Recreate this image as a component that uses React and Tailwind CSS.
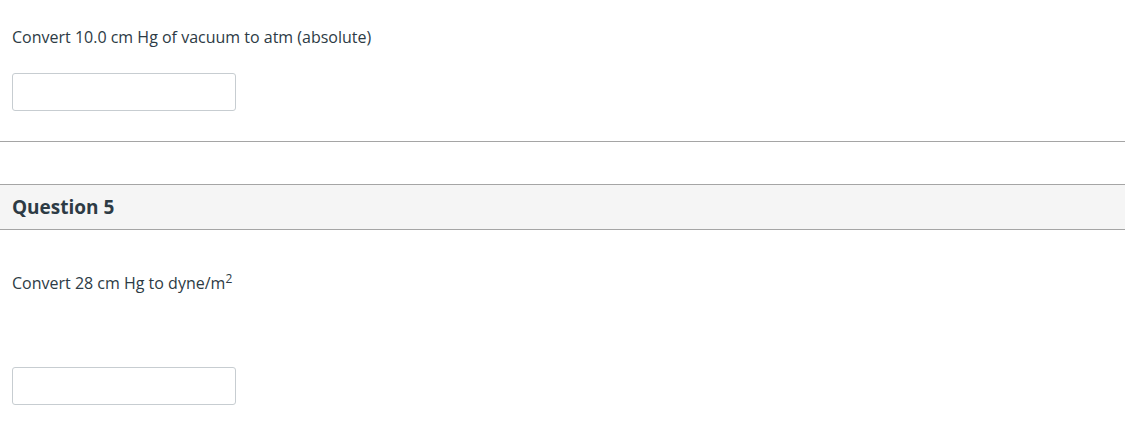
import React from "react";

const AnswerBox = () => (
  <input
    type="text"
    className="block w-[224px] h-[38px] bg-white border border-[#c7cdd1] rounded-[3px] px-2 text-base focus:outline-none"
  />
);

export default function App() {
  return (
    <div className="w-full min-h-screen bg-white text-[#2d3b45]" style={{ fontFamily: '"Open Sans", sans-serif' }}>
      {/* Question 4 tail */}
      <div className="px-3 pt-[25px]">
        <p className="text-base leading-6">Convert 10.0 cm Hg of vacuum to atm (absolute)</p>
        <div className="mt-[24px]">
          <AnswerBox />
        </div>
      </div>
      <div className="mt-[30px] border-t border-[#a5a5a5]" />

      {/* Question 5 */}
      <div className="mt-[42px] border-y border-[#a5a5a5] bg-[#f5f5f5] h-[46px] px-3 flex items-center">
        <h2 className="text-[19px] font-bold leading-6">Question 5</h2>
      </div>
      <div className="px-3 pt-[41px]">
        <p className="text-base leading-6">
          Convert 28 cm Hg to dyne/m<sup className="text-[12px]">2</sup>
        </p>
        <div className="mt-[72px]">
          <AnswerBox />
        </div>
      </div>
    </div>
  );
}
